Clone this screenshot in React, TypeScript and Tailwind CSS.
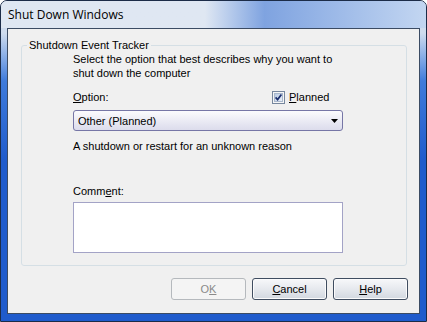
import React from 'react'

// Small Vista-style checkbox drawn in svg
function CheckBox() {
  return (
    <svg width="13" height="13" viewBox="0 0 13 13" className="shrink-0">
      <defs>
        <linearGradient id="cbFill" x1="0" y1="0" x2="1" y2="1">
          <stop offset="0" stopColor="#b4c7e2" />
          <stop offset="1" stopColor="#eef3fa" />
        </linearGradient>
      </defs>
      <rect x="0.5" y="0.5" width="12" height="12" fill="#f6f6f6" stroke="#76879e" />
      <rect x="2.5" y="2.5" width="8" height="8" fill="url(#cbFill)" stroke="#a9b8cc" />
      <path d="M3.6 6.4 L5.6 8.6 L9.4 3.6" fill="none" stroke="#1c2f6e" strokeWidth="1.7" />
    </svg>
  )
}

function DialogButton({ label, keyChar, rest, disabled }: { label?: string; keyChar: string; rest: string; disabled?: boolean }) {
  if (disabled) {
    return (
      <button className="flex h-[22px] w-[75px] items-center justify-center rounded-[3px] border border-[#b5b9bd] bg-[#f4f4f4] text-[11px] text-[#8a8a8a]">
        <span>
          {label}
          <span className="underline">{keyChar}</span>
          {rest}
        </span>
      </button>
    )
  }
  return (
    <button className="flex h-[22px] w-[75px] items-center justify-center rounded-[3px] border border-[#3f4d60] bg-linear-to-b from-[#f7f8fa] via-[#e6e9ee] to-[#d2d8e0] text-[11px] text-black shadow-[inset_0_0_0_1px_#fbfbfc]">
      <span>
        {label}
        <span className="underline">{keyChar}</span>
        {rest}
      </span>
    </button>
  )
}

export default function App() {
  return (
    <div className="flex h-[322px] w-[427px] flex-col overflow-hidden rounded-t-[7px] border border-[#1c2c48] bg-linear-to-b from-[#cfdcee] from-10% via-[#3f7bdb] via-25% to-[#1f5bcc] to-50% font-['Liberation_Sans',Arial,sans-serif]">
      {/* Title bar */}
      <div className="flex h-[27px] shrink-0 items-center bg-linear-to-r from-[#dfe7f2] from-48% via-[#7fa3e0] via-62% to-[#c3d6f1] pl-[7px]">
        <span className="font-['Open_Sans',sans-serif] text-[12px] text-black">Shut Down Windows</span>
      </div>

      {/* Client area */}
      <div className="flex flex-1 px-[6px] pb-[7px]">
        <div className="flex flex-1 flex-col border border-[#3b4b63] bg-[#f0f0f0]">
          <fieldset className="ml-[13px] mr-[12px] mt-[10px] rounded-[3px] border border-[#d5dfe5] pb-[12px] text-[11px] leading-[14px] text-black">
            <legend className="ml-[5px] px-[2px] leading-[13px]">Shutdown Event Tracker</legend>

            <div className="pl-[51px]">
              <p>Select the option that best describes why you want to</p>
              <p>shut down the computer</p>

              <div className="mt-[10px] flex w-[270px] items-center justify-between">
                <span>
                  <span className="underline">O</span>ption:
                </span>
                <label className="flex w-[71px] items-center gap-[4px]">
                  <CheckBox />
                  <span>
                    <span className="underline">P</span>lanned
                  </span>
                </label>
              </div>

              <div className="mt-[6px] flex h-[21px] w-[270px] items-center justify-between rounded-[3px] border border-[#7676a6] bg-linear-to-b from-[#fbfbfd] to-[#dcdcec] pl-[4px] pr-[4px]">
                <span>Other (Planned)</span>
                <svg width="7" height="4" viewBox="0 0 7 4">
                  <polygon points="0,0 7,0 3.5,4" fill="#000" />
                </svg>
              </div>

              <p className="mt-[8px]">A shutdown or restart for an unknown reason</p>

              <p className="mt-[31px]">
                Comm<span className="underline">e</span>nt:
              </p>
              <div className="mt-[4px] h-[51px] w-[270px] border border-[#a3a3c6] bg-white" />
            </div>
          </fieldset>

          <div className="mt-[12px] flex justify-end gap-[6px] pr-[11px]">
            <DialogButton disabled label="O" keyChar="K" rest="" />
            <DialogButton keyChar="C" rest="ancel" />
            <DialogButton keyChar="H" rest="elp" />
          </div>
        </div>
      </div>
    </div>
  )
}
